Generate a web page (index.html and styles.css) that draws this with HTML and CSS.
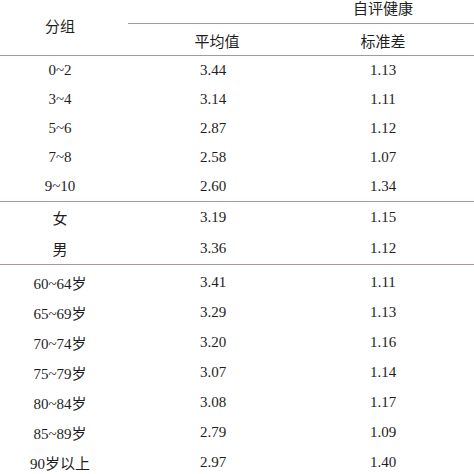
FILE: index.html
```html
<!DOCTYPE html>
<html lang="zh">
<head>
<meta charset="utf-8">
<link rel="stylesheet" href="styles.css">
</head>
<body>
<div class="table">
  <div class="head">
    <div class="h-group">分组</div>
    <div class="h-right">
      <div class="h-top"><span></span><span class="cell">自评健康</span></div>
      <div class="h-sub"><span class="cell">平均值</span><span class="cell">标准差</span></div>
    </div>
  </div>
  <div class="group g1">
    <div class="row"><span>0~2</span><span>3.44</span><span>1.13</span></div>
    <div class="row"><span>3~4</span><span>3.14</span><span>1.11</span></div>
    <div class="row"><span>5~6</span><span>2.87</span><span>1.12</span></div>
    <div class="row"><span>7~8</span><span>2.58</span><span>1.07</span></div>
    <div class="row"><span>9~10</span><span>2.60</span><span>1.34</span></div>
  </div>
  <div class="group g2">
    <div class="row"><span>女</span><span>3.19</span><span>1.15</span></div>
    <div class="row"><span>男</span><span>3.36</span><span>1.12</span></div>
  </div>
  <div class="group g3">
    <div class="row"><span>60~64岁</span><span>3.41</span><span>1.11</span></div>
    <div class="row"><span>65~69岁</span><span>3.29</span><span>1.13</span></div>
    <div class="row"><span>70~74岁</span><span>3.20</span><span>1.16</span></div>
    <div class="row"><span>75~79岁</span><span>3.07</span><span>1.14</span></div>
    <div class="row"><span>80~84岁</span><span>3.08</span><span>1.17</span></div>
    <div class="row"><span>85~89岁</span><span>2.79</span><span>1.09</span></div>
    <div class="row"><span>90岁以上</span><span>2.97</span><span>1.40</span></div>
  </div>
</div>
</body>
</html>
```

FILE: styles.css
```css
html, body {
  margin: 0;
  padding: 0;
  background: #ffffff;
}
body {
  width: 474px;
  height: 474px;
  overflow: hidden;
  font-family: "Liberation Serif", "Noto Sans CJK SC", serif;
  font-size: 15px;
  color: #1e1e1e;
}
.table {
  display: flex;
  flex-direction: column;
}
.head {
  display: flex;
  height: 55px;
  border-bottom: 1px solid #a8989e;
}
.h-group {
  width: 120px;
  display: flex;
  align-items: center;
  justify-content: center;
  padding-bottom: 5px;
  box-sizing: border-box;
}
.h-right {
  flex: 1;
  margin-left: 8px;
  display: flex;
  flex-direction: column;
}
.h-top {
  height: 23px;
  border-bottom: 1px solid #a8989e;
  display: grid;
  grid-template-columns: 178px 154px;
  align-items: start;
  line-height: 19px;
}
.h-sub {
  height: 31px;
  display: grid;
  grid-template-columns: 178px 154px;
  align-items: center;
  padding-top: 2px;
  box-sizing: border-box;
}
.cell {
  text-align: center;
}
.group {
  display: flex;
  flex-direction: column;
  border-bottom: 1px solid #a8989e;
}
.row {
  display: grid;
  grid-template-columns: 120px 186px 154px;
  align-items: center;
  text-align: center;
}
.g1 .row { height: 29px; }
.g2 .row { height: 31px; }
.g3 { padding-top: 2px; border-bottom: none; }
.g3 .row { height: 30px; }
```
